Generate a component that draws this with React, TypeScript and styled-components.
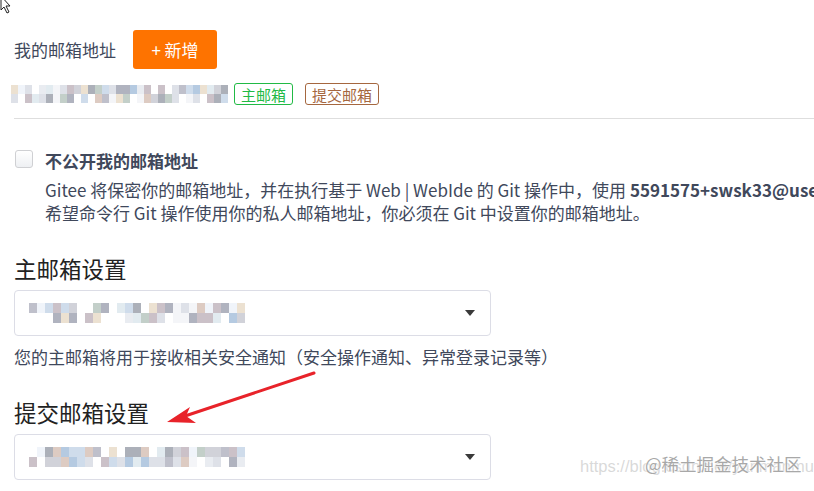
import React, { FC } from "react";
import styled, { createGlobalStyle } from "styled-components";

const GlobalStyle = createGlobalStyle`
  html, body {
    margin: 0;
    padding: 0;
    background: #fff;
    overflow: hidden;
  }
  body {
    font-family: "Noto Sans CJK SC", "Noto Sans", "Liberation Sans", sans-serif;
    color: #40485b;
  }
`;

// pixel-mosaic palette used for the blurred e-mail addresses
const palette = [
  "#ffffff", "#ffffff", "#ffffff", "#f3f4f7", "#e6e9ef", "#d9dce4", "#c9cbd3",
  "#b4b6c2", "#a3a6b4", "#c7d6e8", "#a9c1dc", "#e9dcc9", "#d8c3b8", "#dde8ee",
  "#c2b7bf", "#9ea3ad", "#eef3fa", "#b9c7c0",
];

const makeCells = (seed: number, count: number) => {
  let s = seed;
  const out: string[] = [];
  for (let i = 0; i < count; i++) {
    s = (s * 9301 + 49297) % 233280;
    out.push(palette[Math.floor((s / 233280) * palette.length)]);
  }
  return out;
};

const Mosaic: FC<{ seed: number; cols: number; w?: number; h?: number }> = ({
  seed,
  cols,
  w = 7,
  h = 9,
}) => {
  const cells = [...makeCells(seed, cols), ...makeCells(seed + 17, cols)];
  return (
    <MosaicGrid $cols={cols} $w={w} $h={h}>
      {cells.map((c, i) => (
        <Cell key={i} style={{ background: c }} />
      ))}
    </MosaicGrid>
  );
};

const Caret = () => (
  <svg width="10" height="6" viewBox="0 0 10 6">
    <path d="M0 0h10L5 6z" fill="#3a3a3a" />
  </svg>
);

const App: FC = () => {
  return (
    <Page>
      <GlobalStyle />
      <Cursor width="16" height="18" viewBox="0 0 16 18">
        <path d="M1 -4 L1 10 L4 7 L7 13 L9 12 L6 6 L10 6 Z" fill="#fff" stroke="#222" strokeWidth="1" />
      </Cursor>

      <HeaderRow>
        <Label>我的邮箱地址</Label>
        <AddButton>+ 新增</AddButton>
      </HeaderRow>

      <EmailRow>
        <Mosaic seed={11} cols={31} />
        <Tags>
          <Tag $color="#21ba45">主邮箱</Tag>
          <Tag $color="#a5673f">提交邮箱</Tag>
        </Tags>
      </EmailRow>

      <Divider />

      <CheckRow>
        <CheckBox />
        <CheckBody>
          <CheckTitle>不公开我的邮箱地址</CheckTitle>
          <Desc>
            Gitee 将保密你的邮箱地址，并在执行基于 Web | WebIde 的 Git 操作中，使用{" "}
            <b>5591575+swsk33@user.noreply.gitee.com</b>
          </Desc>
          <Desc>希望命令行 Git 操作使用你的私人邮箱地址，你必须在 Git 中设置你的邮箱地址。</Desc>
        </CheckBody>
      </CheckRow>

      <Section>
        <Heading>主邮箱设置</Heading>
        <Select>
          <Mosaic seed={5} cols={27} w={8} h={10} />
          <Caret />
        </Select>
        <Help>您的主邮箱将用于接收相关安全通知（安全操作通知、异常登录记录等）</Help>
      </Section>

      <Section>
        <Heading>提交邮箱设置</Heading>
        <Select>
          <Mosaic seed={23} cols={27} w={8} h={10} />
          <Caret />
        </Select>
      </Section>

      <Arrow width="160" height="60" viewBox="0 0 160 60">
        <path d="M150 2 L18 46" stroke="#e8232a" strokeWidth="3" strokeLinecap="round" />
        <path d="M3 51 L26 36 L22 45 L32 52 Z" fill="#e8232a" />
      </Arrow>

      <Watermark>
        <WatermarkUrl>https://blog.csdn.net/yanmanmur1</WatermarkUrl>
        <WatermarkBrand>@稀土掘金技术社区</WatermarkBrand>
      </Watermark>
    </Page>
  );
};

const Page = styled.div`
  position: relative;
  width: 814px;
  height: 491px;
  overflow: hidden;
  padding: 30px 0 0 14px;
  box-sizing: border-box;
  display: flex;
  flex-direction: column;
`;

const Cursor = styled.svg`
  position: absolute;
  left: 0;
  top: 0;
`;

const HeaderRow = styled.div`
  display: flex;
  align-items: center;
  gap: 17px;
`;

const Label = styled.span`
  font-size: 17px;
  color: #40485b;
`;

const AddButton = styled.button`
  height: 39px;
  width: 84px;
  border: none;
  border-radius: 3px;
  background: #fe7300;
  color: #fff;
  font-family: inherit;
  font-size: 17px;
  padding: 0;
`;

const EmailRow = styled.div`
  display: flex;
  align-items: center;
  gap: 6px;
  margin: 14px 0 0 -3px;
  height: 22px;
`;

const MosaicGrid = styled.div<{ $cols: number; $w: number; $h: number }>`
  display: grid;
  grid-template-columns: repeat(${(p) => p.$cols}, ${(p) => p.$w}px);
  grid-auto-rows: ${(p) => p.$h}px;
  opacity: 0.85;
`;

const Cell = styled.div``;

const Tags = styled.div`
  display: flex;
  gap: 12px;
`;

const Tag = styled.span<{ $color: string }>`
  display: inline-flex;
  align-items: center;
  height: 22px;
  box-sizing: border-box;
  padding: 0 6px;
  border: 1px solid ${(p) => p.$color};
  border-radius: 3px;
  color: ${(p) => p.$color};
  font-size: 15px;
`;

const Divider = styled.div`
  height: 1px;
  background: #dedede;
  margin-top: 13px;
`;

const CheckRow = styled.div`
  display: flex;
  align-items: flex-start;
  gap: 12px;
  margin-top: 31px;
`;

const CheckBox = styled.span`
  box-sizing: border-box;
  width: 18px;
  height: 18px;
  margin-left: 1px;
  border: 1px solid #cfd0d3;
  border-radius: 3px;
  background: linear-gradient(#fff, #eef0f3);
  flex-shrink: 0;
`;

const CheckBody = styled.div`
  display: flex;
  flex-direction: column;
`;

const CheckTitle = styled.div`
  font-size: 17px;
  font-weight: 700;
  color: #40485b;
  line-height: 22px;
  margin-bottom: 6px;
`;

const Desc = styled.div`
  font-size: 17px;
  line-height: 23px;
  white-space: nowrap;
  color: #40485b;
  b {
    font-weight: 700;
  }
`;

const Section = styled.div`
  display: flex;
  flex-direction: column;
  margin-top: 30px;
`;

const Heading = styled.div`
  font-size: 22.5px;
  line-height: 28px;
  color: #222;
  margin-bottom: 8px;
`;

const Select = styled.div`
  width: 477px;
  height: 46px;
  box-sizing: border-box;
  border: 1px solid #dcdde6;
  border-radius: 4px;
  display: flex;
  align-items: center;
  justify-content: space-between;
  padding: 0 15px 0 14px;
`;

const Help = styled.div`
  font-size: 17px;
  line-height: 22px;
  margin-top: 10px;
  color: #40485b;
`;

const Arrow = styled.svg`
  position: absolute;
  left: 164px;
  top: 371px;
`;

const Watermark = styled.div`
  position: absolute;
  left: 580px;
  top: 452px;
  width: 234px;
  height: 30px;
`;

const WatermarkUrl = styled.span`
  position: absolute;
  left: 0;
  top: 5px;
  font-family: "Liberation Sans", sans-serif;
  font-size: 16.5px;
  color: rgba(185, 185, 185, 0.55);
  white-space: nowrap;
`;

const WatermarkBrand = styled.span`
  position: absolute;
  left: 65px;
  top: -1px;
  font-size: 17.5px;
  color: #a8a8a8;
  white-space: nowrap;
  text-shadow: 0 0 2px #fff, 0 0 2px #fff;
`;

export default App;
